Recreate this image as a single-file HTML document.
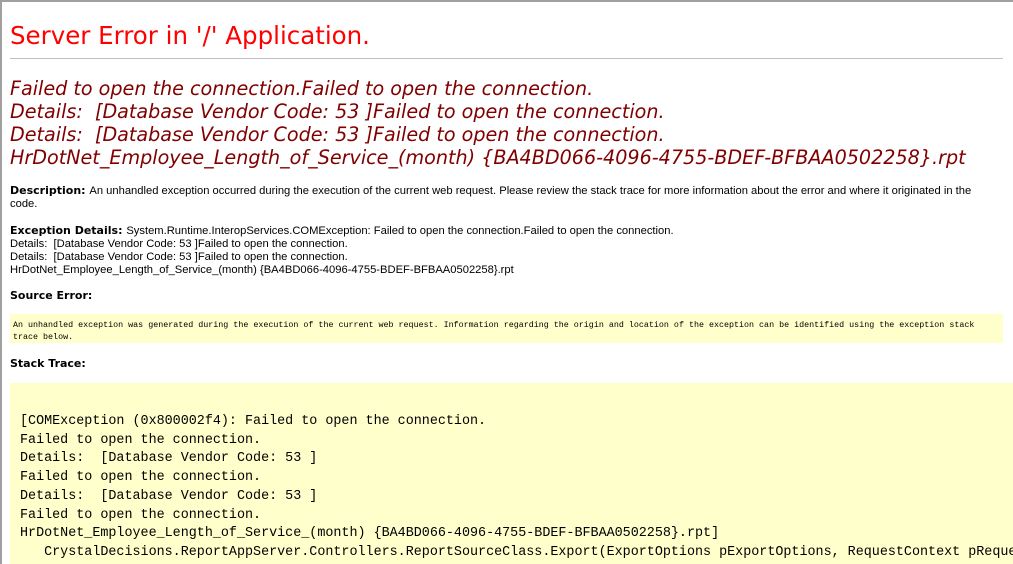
<!DOCTYPE html>
<html><head><meta charset="utf-8"><style>
html,body{margin:0;padding:0;background:#fff;width:1013px;height:564px;overflow:hidden;}
body{border-top:2px solid #a0a0a0;border-left:2px solid #a0a0a0;box-sizing:border-box;position:relative;}
.a{position:absolute;white-space:nowrap;margin:0;}
h1{font-family:"DejaVu Sans",Verdana,sans-serif;font-weight:normal;font-size:24.5px;color:#ff0000;left:8px;top:19px;}
hr{position:absolute;left:8px;top:56px;width:993px;margin:0;border:0;border-top:1px solid #c0c0c0;height:0;}
.h2{font-family:"DejaVu Sans",Verdana,sans-serif;font-style:italic;font-size:19.15px;line-height:23px;color:#800000;left:8px;top:75px;}
.t{font-family:"Liberation Sans",Arial,sans-serif;font-size:11.2px;line-height:13px;color:#000;left:8px;}
.t b{font-family:"DejaVu Sans",Verdana,sans-serif;font-size:11px;}
.y1{position:absolute;left:8px;top:312px;width:993px;height:29px;background:#ffffcc;font-family:"Liberation Mono",monospace;font-size:8.35px;line-height:12px;color:#000;padding:5px 0 0 3px;box-sizing:border-box;}
.y2{position:absolute;left:8px;top:381px;width:1003px;height:200px;background:#ffffcc;overflow:hidden;}
.y2 pre{position:absolute;left:10px;top:30px;margin:0;font-family:"Liberation Mono",monospace;font-size:13.4px;line-height:18.7px;color:#000;}
</style></head><body>
<h1 class="a">Server Error in '/' Application.</h1>
<hr>
<div class="a h2">Failed to open the connection.Failed to open the connection.<br>Details:&nbsp; [Database Vendor Code: 53 ]Failed to open the connection.<br>Details:&nbsp; [Database Vendor Code: 53 ]Failed to open the connection.<br>HrDotNet_Employee_Length_of_Service_(month) {BA4BD066-4096-4755-BDEF-BFBAA0502258}.rpt</div>
<div class="a t" style="top:182px"><b>Description: </b>An unhandled exception occurred during the execution of the current web request. Please review the stack trace for more information about the error and where it originated in the<br>code.</div>
<div class="a t" style="top:222px"><b>Exception Details: </b>System.Runtime.InteropServices.COMException: Failed to open the connection.Failed to open the connection.<br>Details:&nbsp; [Database Vendor Code: 53 ]Failed to open the connection.<br>Details:&nbsp; [Database Vendor Code: 53 ]Failed to open the connection.<br>HrDotNet_Employee_Length_of_Service_(month) {BA4BD066-4096-4755-BDEF-BFBAA0502258}.rpt</div>
<div class="a t" style="top:287px"><b>Source Error:</b></div>
<div class="y1">An unhandled exception was generated during the execution of the current web request. Information regarding the origin and location of the exception can be identified using the exception stack<br>trace below.</div>
<div class="a t" style="top:355px"><b>Stack Trace:</b></div>
<div class="y2"><pre>[COMException (0x800002f4): Failed to open the connection.
Failed to open the connection.
Details:  [Database Vendor Code: 53 ]
Failed to open the connection.
Details:  [Database Vendor Code: 53 ]
Failed to open the connection.
HrDotNet_Employee_Length_of_Service_(month) {BA4BD066-4096-4755-BDEF-BFBAA0502258}.rpt]
   CrystalDecisions.ReportAppServer.Controllers.ReportSourceClass.Export(ExportOptions pExportOptions, RequestContext pRequestContext)</pre></div>
</body></html>
